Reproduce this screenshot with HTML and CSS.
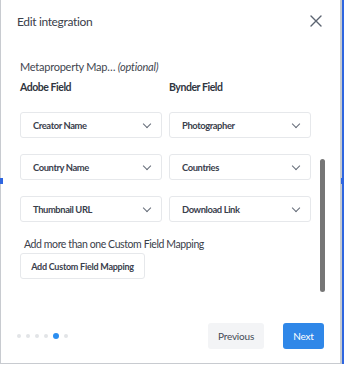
FILE: index.html
```html
<!DOCTYPE html>
<html lang="en">
<head>
    <meta charset="UTF-8">
    <meta name="viewport" content="width=device-width, initial-scale=1.0">
    <title>Edit integration</title>
    <link rel="stylesheet" href="styles.css">
</head>
<body>
    <div class="screen">
        <div class="modal">
            <!-- Header -->
            <div class="modal-header">
                <h1 class="modal-title">Edit integration</h1>
                <button class="close-btn" aria-label="Close">
                    <svg width="12" height="12" viewBox="0 0 12 12"><path d="M1 1 L11 11 M11 1 L1 11" stroke="#5b6370" stroke-width="1.4" stroke-linecap="round"/></svg>
                </button>
            </div>

            <!-- Body -->
            <div class="modal-body">
                <div class="content">
                    <p class="section-label">Metaproperty Map… <em>(optional)</em></p>
                    <div class="field-grid">
                        <div class="col-head">Adobe Field</div>
                        <div class="col-head">Bynder Field</div>

                        <div class="select">Creator Name <span class="chev"></span></div>
                        <div class="select">Photographer <span class="chev"></span></div>

                        <div class="select">Country Name <span class="chev"></span></div>
                        <div class="select">Countries <span class="chev"></span></div>

                        <div class="select">Thumbnail URL <span class="chev"></span></div>
                        <div class="select">Download Link <span class="chev"></span></div>
                    </div>
                    <p class="hint">Add more than one Custom Field Mapping</p>
                    <button class="btn-outline">Add Custom Field Mapping</button>
                </div>
                <div class="scroll-track"><div class="scroll-thumb"></div></div>
            </div>

            <!-- Footer -->
            <div class="modal-footer">
                <div class="dots">
                    <span class="dot"></span>
                    <span class="dot"></span>
                    <span class="dot"></span>
                    <span class="dot"></span>
                    <span class="dot active"></span>
                    <span class="dot"></span>
                </div>
                <div class="actions">
                    <button class="btn-secondary">Previous</button>
                    <button class="btn-primary">Next</button>
                </div>
            </div>
        </div>
        <span class="handle handle-left"></span>
        <span class="handle handle-right"></span>
    </div>
</body>
</html>
```

FILE: styles.css
```css
* {
    box-sizing: border-box;
}
body {
    margin: 0;
    background: #ffffff;
    font-family: Lato, "Open Sans", sans-serif;
    color: #333a45;
}
.screen {
    position: relative;
    width: 345px;
    height: 365px;
}
.modal {
    width: 342px;
    height: 364px;
    background: #fff;
    border-left: 1px solid #c8cbd0;
    border-right: 2px solid #c8cbd0;
    border-bottom: 1px solid #c8cbd0;
    box-shadow: 2px 0 0 #2f66e0;
    display: flex;
    flex-direction: column;
}
.modal-header {
    display: flex;
    align-items: center;
    justify-content: space-between;
    padding: 2px 18px 0 16px;
    height: 40px;
}
.modal-title {
    margin: 0;
    font-size: 12px;
    letter-spacing: -0.35px;
    font-weight: 400;
    color: #3a404a;
}
.close-btn {
    background: none;
    border: none;
    padding: 0;
    width: 12px;
    height: 12px;
    display: flex;
}
.modal-body {
    display: flex;
    height: 268px;
}
.content {
    width: 303px;
    padding-left: 19px;
}
.section-label {
    margin: 20px 0 0;
    font-size: 11px;
    letter-spacing: -0.25px;
    color: #3f4650;
    line-height: 14px;
}
.section-label em {
    font-style: italic;
}
.field-grid {
    display: grid;
    grid-template-columns: 142px 142px;
    column-gap: 7px;
    row-gap: 16px;
    margin-top: 6px;
}
.col-head {
    font-size: 10.5px;
    letter-spacing: -0.45px;
    font-weight: 700;
    color: #2f3540;
    line-height: 14px;
    margin-bottom: 2px;
}
.select {
    position: relative;
    height: 26px;
    border: 1px solid #e6e8eb;
    border-radius: 3px;
    padding-left: 12px;
    display: flex;
    align-items: center;
    font-size: 9.4px;
    letter-spacing: -0.4px;
    font-weight: 700;
    color: #3a404c;
}
.chev {
    position: absolute;
    right: 11px;
    top: 8px;
    width: 6px;
    height: 6px;
    border-right: 1.2px solid #656c78;
    border-bottom: 1.2px solid #656c78;
    transform: rotate(45deg);
}
.hint {
    margin: 15px 0 0 4px;
    font-size: 10.5px;
    letter-spacing: -0.4px;
    color: #3a404a;
    line-height: 14px;
}
.btn-outline {
    margin-top: 2px;
    height: 26px;
    width: 125px;
    background: #fff;
    border: 1px solid #e6e8eb;
    border-radius: 3px;
    font-family: inherit;
    font-size: 9px;
    letter-spacing: -0.25px;
    font-weight: 700;
    color: #3a404c;
    padding: 0;
}
.scroll-track {
    width: 5px;
    margin-left: 16px;
}
.scroll-thumb {
    margin-top: 119px;
    height: 133px;
    background: #767676;
    border-radius: 3px;
}
.modal-footer {
    flex: 1;
    display: flex;
    align-items: flex-start;
    justify-content: space-between;
    padding: 15px 16px 0 16px;
}
.dots {
    display: flex;
    align-items: center;
    gap: 5px;
    height: 26px;
}
.dot {
    width: 4px;
    height: 4px;
    border-radius: 50%;
    background: #e2e4e7;
}
.dot.active {
    width: 6px;
    height: 6px;
    background: #2b8ef0;
}
.actions {
    display: flex;
    gap: 19px;
}
.actions button {
    height: 26px;
    border: none;
    border-radius: 3px;
    font-family: inherit;
    font-size: 10px;
    letter-spacing: -0.2px;
    padding: 0;
}
.btn-secondary {
    width: 56px;
    background: #f3f4f6;
    color: #454b55;
}
.btn-primary {
    width: 41px;
    background: #2f87e8;
    color: #fff;
}
.handle {
    position: absolute;
    top: 178px;
    width: 3px;
    height: 6px;
    background: #2f66e0;
}
.handle-left {
    left: 0;
}
.handle-right {
    left: 341px;
}
```
